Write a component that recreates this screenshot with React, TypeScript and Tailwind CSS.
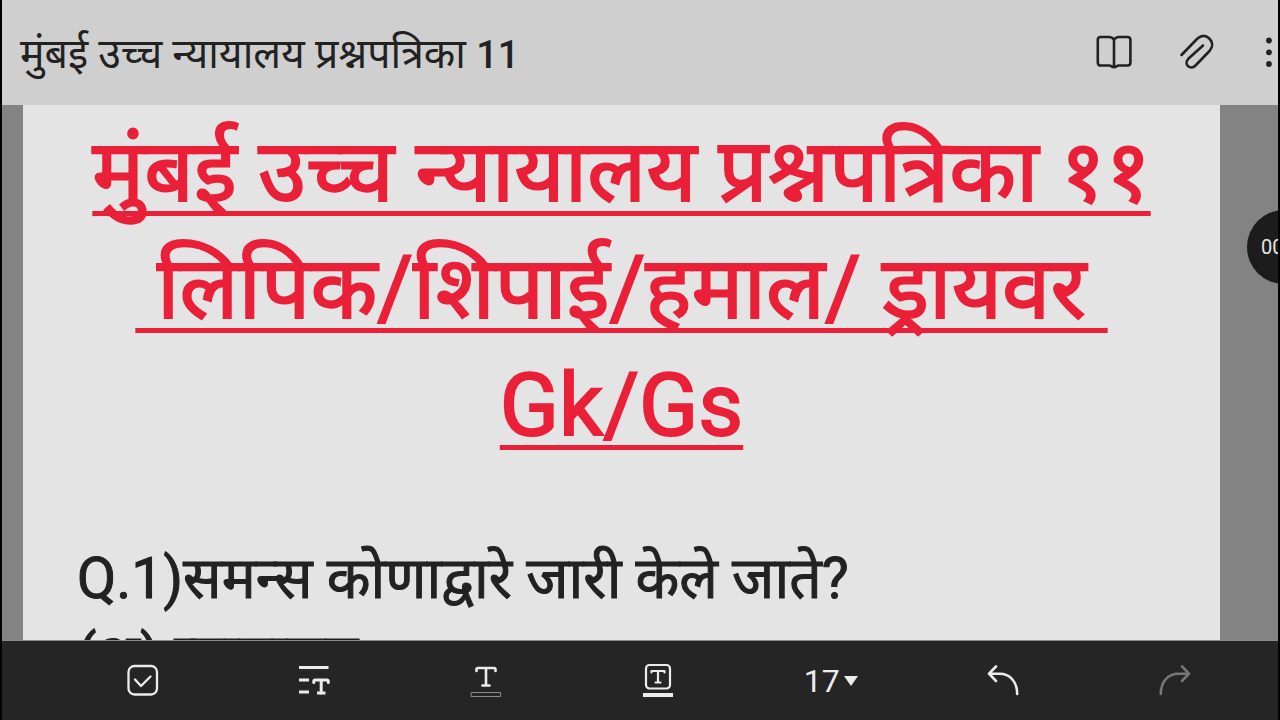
import type { ReactNode } from "react";

const stroke = {
  fill: "none",
  stroke: "currentColor",
  strokeLinecap: "round" as const,
  strokeLinejoin: "round" as const,
};

function BookIcon() {
  return (
    <svg width="40" height="40" viewBox="-1 0 40 40" strokeWidth="2.6" {...stroke} aria-hidden="true">
      <path d="M20 8C19 6 17.500 5 15 5H6.500a2.700 2.700 0 0 0-2.700 2.700v23.100a2.700 2.700 0 0 0 2.700 2.700H15.500c1.500 0 2 1.700 4.500 1.700s3-1.700 4.500-1.700h9.200a2.700 2.700 0 0 0 2.700-2.700V7.700a2.700 2.700 0 0 0-2.700-2.700H25c-2.500 0-4 1-5 3V35" />
    </svg>
  );
}

function ClipIcon() {
  return (
    <svg width="40" height="40" viewBox="2 0 40 40" strokeWidth="2.600" {...stroke} aria-hidden="true">
      <path d="M4.500 23 19.500 7.500C23.500 3 28.500 2.800 32.300 6.500S36 15 32.500 19L18.500 33.500c-2.500 2.600-5.500 2.600-7.500.6s-2-5 .3-7.300L26 13.500" />
    </svg>
  );
}

function MoreIcon() {
  return (
    <svg width="8" height="40" viewBox="0 0 8 40" fill="currentColor" aria-hidden="true">
      <circle cx="4" cy="8.500" r="2.900" />
      <circle cx="4" cy="20.300" r="2.900" />
      <circle cx="4" cy="32" r="2.900" />
    </svg>
  );
}

function CheckIcon() {
  return (
    <svg width="36" height="36" viewBox="0 0 36 36" strokeWidth="2.300" {...stroke} aria-hidden="true">
      <rect x="4.500" y="3" width="28.500" height="28.500" rx="6" />
      <path d="m11 16.500 6 6.500 9.500-9.500" />
    </svg>
  );
}

function ParagraphIcon() {
  return (
    <svg width="36" height="36" viewBox="0 0 36 36" strokeWidth="2.800" {...stroke} strokeLinecap="butt" aria-hidden="true">
      <path d="M3 4.500h29.500M3 17h10M3 29h10M21 30h8.500" />
      <path d="M17.800 19.500v-1q0-1.500 1.500-1.500h11.500q1.500 0 1.500 1.500v1M25.200 17v13" strokeWidth="3" strokeLinecap="round" />
    </svg>
  );
}

function TextColorIcon() {
  return (
    <svg width="36" height="36" viewBox="0 0 36 36" strokeWidth="2.600" {...stroke} aria-hidden="true">
      <path d="M8.500 8V6.500q0-1.500 1.500-1.500h16q1.500 0 1.500 1.500V8M18 5v17.500M14.500 22.500h7" />
      <rect x="3.500" y="29.500" width="29" height="4" strokeWidth="1" className="text-[#8a8a8a]" />
    </svg>
  );
}

function HighlightIcon() {
  return (
    <svg width="36" height="36" viewBox="0 0 36 36" strokeWidth="2.200" {...stroke} aria-hidden="true">
      <rect x="6" y="2" width="24" height="23.500" rx="3.500" />
      <path d="M11.500 9.500V8h13v1.500M18 8v11.500M15.500 19.500h5" />
      <path d="M3 32h30" strokeWidth="4" strokeLinecap="butt" />
    </svg>
  );
}

function UndoIcon() {
  return (
    <svg width="36" height="36" viewBox="0 0 36 36" strokeWidth="2.600" {...stroke} aria-hidden="true">
      <path d="M11 3.500 4 10.700l7 7.300M4 10.700h10.500c10.500 0 17.700 8 17.700 20.300" />
    </svg>
  );
}

function RedoIcon() {
  return (
    <svg width="36" height="36" viewBox="0 0 36 36" strokeWidth="2.600" {...stroke} aria-hidden="true">
      <path d="M25 3.500 32 10.700l-7 7.300M32 10.700H21.500C11 10.700 3.800 18.700 3.800 31" />
    </svg>
  );
}

function Tool({ label, children, disabled }: { label: string; children: ReactNode; disabled?: boolean }) {
  return (
    <button
      type="button"
      aria-label={label}
      disabled={disabled}
      className="flex h-full flex-1 items-center justify-center text-[#ececec] disabled:text-[#777777]"
    >
      {children}
    </button>
  );
}

export default function App() {
  return (
    <div className="relative flex h-screen flex-col overflow-hidden border-x-2 border-black bg-[#838383] font-[Roboto,'Noto_Sans','Noto_Sans_Devanagari',sans-serif] text-[#222222]">
      <header className="flex h-[105px] shrink-0 items-center justify-between bg-[#cfcfcf] pl-[18px] pr-[5px]">
        <h1 className="whitespace-nowrap pt-1 text-[41px] font-normal leading-[48px]">
          मुंबई उच्च न्यायालय प्रश्नपत्रिका <span className="text-[38px] font-medium">11</span>
        </h1>
        <div className="flex items-center gap-[46px] pb-0.5">
          <button type="button" aria-label="Reading mode"><BookIcon /></button>
          <button type="button" aria-label="Attach"><ClipIcon /></button>
          <button type="button" aria-label="More options"><MoreIcon /></button>
        </div>
      </header>

      <main className="ml-[21px] mr-[58px] min-h-0 flex-1 overflow-hidden bg-[#e4e4e4]">
        <h2 className="whitespace-nowrap pt-2 text-center text-[87px] font-normal leading-[117px] text-[#ea2038] underline decoration-[5px] underline-offset-[10px] [-webkit-text-stroke:2px_currentColor] [text-decoration-skip-ink:none]">
          मुंबई उच्च न्यायालय प्रश्नपत्रिका ११
          <br />
          {"\u00a0लिपिक/शिपाई/हमाल/ ड्रायवर\u00a0"}
          <br />
          Gk/Gs
        </h2>
        <div className="mt-[76px] whitespace-nowrap pl-[54px] text-[57px] font-normal leading-[77px] [-webkit-text-stroke:1px_currentColor]">
          <p>Q.1)समन्स कोणाद्वारे जारी केले जाते?</p>
          <p>(अ) न्यायालय</p>
        </div>
      </main>

      <footer className="flex h-20 shrink-0 items-center border-t border-[#8a8a8a] bg-[#252525] pl-[54px] pr-[17px]">
        <Tool label="Checklist"><CheckIcon /></Tool>
        <Tool label="Paragraph style"><ParagraphIcon /></Tool>
        <Tool label="Text colour"><TextColorIcon /></Tool>
        <Tool label="Highlight"><HighlightIcon /></Tool>
        <Tool label="Font size">
          <span className="flex items-center gap-1 text-[32px] leading-none">
            17
            <svg width="14" height="10" viewBox="0 0 14 10" fill="currentColor" aria-hidden="true">
              <path d="M0 0h14L7 10z" />
            </svg>
          </span>
        </Tool>
        <Tool label="Undo"><UndoIcon /></Tool>
        <Tool label="Redo" disabled><RedoIcon /></Tool>
      </footer>

      <button
        type="button"
        aria-label="Recording time"
        className="absolute -right-[43px] top-[210px] flex size-[74px] items-center rounded-full bg-[#1c1c1c] pl-[14px] text-[20px] text-[#e4e4e4]"
      >
        00
      </button>
    </div>
  );
}
